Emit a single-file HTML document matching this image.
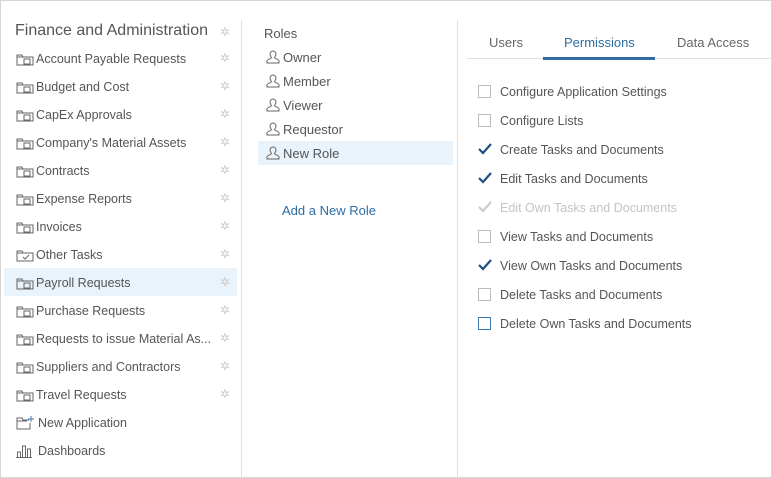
<!DOCTYPE html>
<html><head><style>
*{margin:0;padding:0;box-sizing:border-box}
body{width:772px;height:478px;background:#fff;font-family:"Liberation Sans",sans-serif;color:#555;font-size:12.5px;position:relative;overflow:hidden}
.frame{position:absolute;left:0;top:0;width:772px;height:478px;border:1px solid #d6d6d6}
.vl{position:absolute;top:20px;bottom:0;width:1px;background:#e0e0e0}
.row{position:absolute;left:4px;width:233px;height:28px;line-height:30px;padding-left:32px;white-space:nowrap}
.row.sel{background:#e9f3fb}
.ic{position:absolute;left:12px;top:8px}
.gear{position:absolute;left:216px;top:8px;color:#ccc;font-size:12px;line-height:12px}
.role{position:absolute;left:258px;width:195px;height:24px;line-height:26px;padding-left:25px;font-size:13px}
.role.sel{background:#e9f3fb}
.role svg{position:absolute;left:8px;top:5px}
.cb{position:absolute;left:478px;height:20px;line-height:22px;padding-left:22px;font-size:12.5px;white-space:nowrap}
.cb i{position:absolute;left:0;top:4px;width:13px;height:13px;border:1px solid #bbb;background:#fff}
.cb svg{position:absolute;left:0;top:3px}
</style></head><body>
<div class="frame"></div>
<div class="vl" style="left:241px"></div>
<div class="vl" style="left:457px"></div>
<div style="position:absolute;left:15px;top:22px;font-size:16px;color:#555">Finance and Administration</div>
<div style="position:absolute;left:220px;top:25px;color:#ccc;font-size:12px">✲</div>

<div class="row" style="top:44px"><svg class="ic" width="18" height="14" viewBox="0 0 18 14"><path d="M1 3h5l1 2h10v8H1z M1 5h16" fill="none" stroke="#666"/><rect x="8" y="7" width="6" height="5" fill="none" stroke="#666"/></svg>Account Payable Requests<span class="gear">✲</span></div>
<div class="row" style="top:72px"><svg class="ic" width="18" height="14" viewBox="0 0 18 14"><path d="M1 3h5l1 2h10v8H1z M1 5h16" fill="none" stroke="#666"/><rect x="8" y="7" width="6" height="5" fill="none" stroke="#666"/></svg>Budget and Cost<span class="gear">✲</span></div>
<div class="row" style="top:100px"><svg class="ic" width="18" height="14" viewBox="0 0 18 14"><path d="M1 3h5l1 2h10v8H1z M1 5h16" fill="none" stroke="#666"/><rect x="8" y="7" width="6" height="5" fill="none" stroke="#666"/></svg>CapEx Approvals<span class="gear">✲</span></div>
<div class="row" style="top:128px"><svg class="ic" width="18" height="14" viewBox="0 0 18 14"><path d="M1 3h5l1 2h10v8H1z M1 5h16" fill="none" stroke="#666"/><rect x="8" y="7" width="6" height="5" fill="none" stroke="#666"/></svg>Company's Material Assets<span class="gear">✲</span></div>
<div class="row" style="top:156px"><svg class="ic" width="18" height="14" viewBox="0 0 18 14"><path d="M1 3h5l1 2h10v8H1z M1 5h16" fill="none" stroke="#666"/><rect x="8" y="7" width="6" height="5" fill="none" stroke="#666"/></svg>Contracts<span class="gear">✲</span></div>
<div class="row" style="top:184px"><svg class="ic" width="18" height="14" viewBox="0 0 18 14"><path d="M1 3h5l1 2h10v8H1z M1 5h16" fill="none" stroke="#666"/><rect x="8" y="7" width="6" height="5" fill="none" stroke="#666"/></svg>Expense Reports<span class="gear">✲</span></div>
<div class="row" style="top:212px"><svg class="ic" width="18" height="14" viewBox="0 0 18 14"><path d="M1 3h5l1 2h10v8H1z M1 5h16" fill="none" stroke="#666"/><rect x="8" y="7" width="6" height="5" fill="none" stroke="#666"/></svg>Invoices<span class="gear">✲</span></div>
<div class="row" style="top:240px"><svg class="ic" width="18" height="14" viewBox="0 0 18 14"><path d="M1 3h5l1 2h10v8H1z M1 5h16" fill="none" stroke="#666"/><path d="M7 9l2 2 4-4" fill="none" stroke="#666"/></svg>Other Tasks<span class="gear">✲</span></div>
<div class="row sel" style="top:268px"><svg class="ic" width="18" height="14" viewBox="0 0 18 14"><path d="M1 3h5l1 2h10v8H1z M1 5h16" fill="none" stroke="#666"/><rect x="8" y="7" width="6" height="5" fill="none" stroke="#666"/></svg>Payroll Requests<span class="gear">✲</span></div>
<div class="row" style="top:296px"><svg class="ic" width="18" height="14" viewBox="0 0 18 14"><path d="M1 3h5l1 2h10v8H1z M1 5h16" fill="none" stroke="#666"/><rect x="8" y="7" width="6" height="5" fill="none" stroke="#666"/></svg>Purchase Requests<span class="gear">✲</span></div>
<div class="row" style="top:324px"><svg class="ic" width="18" height="14" viewBox="0 0 18 14"><path d="M1 3h5l1 2h10v8H1z M1 5h16" fill="none" stroke="#666"/><rect x="8" y="7" width="6" height="5" fill="none" stroke="#666"/></svg>Requests to issue Material As...<span class="gear">✲</span></div>
<div class="row" style="top:352px"><svg class="ic" width="18" height="14" viewBox="0 0 18 14"><path d="M1 3h5l1 2h10v8H1z M1 5h16" fill="none" stroke="#666"/><rect x="8" y="7" width="6" height="5" fill="none" stroke="#666"/></svg>Suppliers and Contractors<span class="gear">✲</span></div>
<div class="row" style="top:380px"><svg class="ic" width="18" height="14" viewBox="0 0 18 14"><path d="M1 3h5l1 2h10v8H1z M1 5h16" fill="none" stroke="#666"/><rect x="8" y="7" width="6" height="5" fill="none" stroke="#666"/></svg>Travel Requests<span class="gear">✲</span></div>
<div class="row" style="top:408px;padding-left:34px"><svg class="ic" width="18" height="14" viewBox="0 0 18 14"><path d="M13 4H7L6 2H1v11h13V7 M1 5h10" fill="none" stroke="#666"/><path d="M15 0v6M12 3h6" stroke="#3a7ab5"/></svg>New Application</div>
<div class="row" style="top:436px;padding-left:34px"><svg class="ic" width="16" height="14" viewBox="0 0 16 14"><path d="M1.5 13V8h3v5M6.5 13V2h3v11M11.5 13V5h3v8M0 13.5h16" fill="none" stroke="#666"/></svg>Dashboards</div>

<div style="position:absolute;left:264px;top:26px;font-size:13px">Roles</div>
<div class="role" style="top:45px"><svg width="14" height="14" viewBox="0 0 14 14"><path d="M7 1a3 3 0 0 1 3 3c0 2-1.5 3-1.5 3.8 0 .8 4.5 1.2 4.5 3.2v2H1v-2c0-2 4.5-2.4 4.5-3.2C5.5 7 4 6 4 4a3 3 0 0 1 3-3z" fill="none" stroke="#666"/></svg>Owner</div>
<div class="role" style="top:69px"><svg width="14" height="14" viewBox="0 0 14 14"><path d="M7 1a3 3 0 0 1 3 3c0 2-1.5 3-1.5 3.8 0 .8 4.5 1.2 4.5 3.2v2H1v-2c0-2 4.5-2.4 4.5-3.2C5.5 7 4 6 4 4a3 3 0 0 1 3-3z" fill="none" stroke="#666"/></svg>Member</div>
<div class="role" style="top:93px"><svg width="14" height="14" viewBox="0 0 14 14"><path d="M7 1a3 3 0 0 1 3 3c0 2-1.5 3-1.5 3.8 0 .8 4.5 1.2 4.5 3.2v2H1v-2c0-2 4.5-2.4 4.5-3.2C5.5 7 4 6 4 4a3 3 0 0 1 3-3z" fill="none" stroke="#666"/></svg>Viewer</div>
<div class="role" style="top:117px"><svg width="14" height="14" viewBox="0 0 14 14"><path d="M7 1a3 3 0 0 1 3 3c0 2-1.5 3-1.5 3.8 0 .8 4.5 1.2 4.5 3.2v2H1v-2c0-2 4.5-2.4 4.5-3.2C5.5 7 4 6 4 4a3 3 0 0 1 3-3z" fill="none" stroke="#666"/></svg>Requestor</div>
<div class="role sel" style="top:141px"><svg width="14" height="14" viewBox="0 0 14 14"><path d="M7 1a3 3 0 0 1 3 3c0 2-1.5 3-1.5 3.8 0 .8 4.5 1.2 4.5 3.2v2H1v-2c0-2 4.5-2.4 4.5-3.2C5.5 7 4 6 4 4a3 3 0 0 1 3-3z" fill="none" stroke="#666"/></svg>New Role</div>
<div style="position:absolute;left:282px;top:203px;color:#2e6da4;font-size:13px">Add a New Role</div>

<div style="position:absolute;left:467px;right:0;top:58px;height:1px;background:#e0e0e0"></div>
<div style="position:absolute;left:489px;top:35px;font-size:13px;color:#666">Users</div>
<div style="position:absolute;left:564px;top:35px;font-size:13px;color:#2e6da4">Permissions</div>
<div style="position:absolute;left:543px;top:57px;width:112px;height:3px;background:#2e6da4"></div>
<div style="position:absolute;left:677px;top:35px;font-size:13px;color:#666">Data Access</div>

<div class="cb" style="top:81px"><i></i>Configure Application Settings</div>
<div class="cb" style="top:110px"><i></i>Configure Lists</div>
<div class="cb" style="top:139px"><svg width="14" height="14" viewBox="0 0 14 14"><path d="M1 7l4 4 8-9" fill="none" stroke="#1f4f82" stroke-width="2.2"/></svg>Create Tasks and Documents</div>
<div class="cb" style="top:168px"><svg width="14" height="14" viewBox="0 0 14 14"><path d="M1 7l4 4 8-9" fill="none" stroke="#1f4f82" stroke-width="2.2"/></svg>Edit Tasks and Documents</div>
<div class="cb" style="top:197px;color:#c4c4c4"><svg width="14" height="14" viewBox="0 0 14 14"><path d="M1 7l4 4 8-9" fill="none" stroke="#c8ccd2" stroke-width="2.2"/></svg>Edit Own Tasks and Documents</div>
<div class="cb" style="top:226px"><i></i>View Tasks and Documents</div>
<div class="cb" style="top:255px"><svg width="14" height="14" viewBox="0 0 14 14"><path d="M1 7l4 4 8-9" fill="none" stroke="#1f4f82" stroke-width="2.2"/></svg>View Own Tasks and Documents</div>
<div class="cb" style="top:284px"><i></i>Delete Tasks and Documents</div>
<div class="cb" style="top:313px"><i style="border-color:#3a7ab5"></i>Delete Own Tasks and Documents</div>
</body></html>
